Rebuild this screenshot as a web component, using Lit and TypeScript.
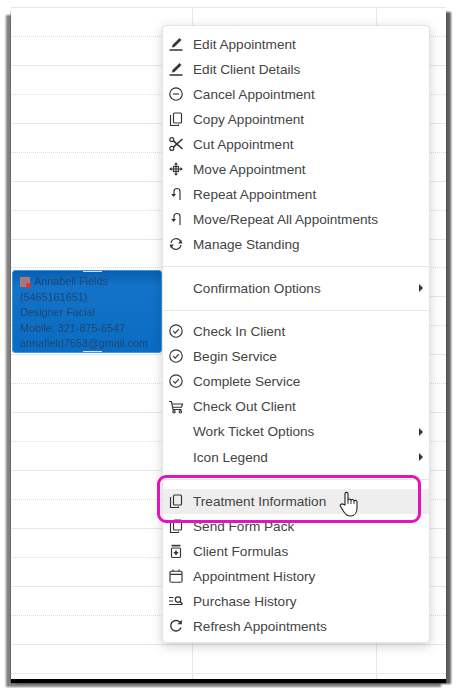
import { LitElement, html, css, svg } from "lit";
import { customElement } from "lit/decorators.js";

const pencil = svg`<path d="M4.2 11.2 L4.7 8.9 L11.5 2.3 L13.3 4.1 L6.5 10.7 Z" fill="#333" stroke="#333" stroke-width=".4"/><path d="M1.5 14 H14.5" stroke="#222" stroke-width="1.4"/>`;
const copy = svg`<rect x="5.5" y="2" width="8" height="10" rx="1"/><path d="M3.2 4.5 H2.5 V14.5 H10.5 V13.5" />`;
const check = svg`<circle cx="8" cy="8" r="6.2"/><path d="M5.2 8.2 L7.2 10.2 L10.8 6.2"/>`;
const repeat = svg`<path d="M6 8 V5.5 A3 3 0 0 1 12 5.5 V14"/><path d="M3.2 8 H8 L5.6 11 Z" fill="#333" stroke="none"/>`;

const ICONS: Record<string, unknown> = {
  pencil,
  cancel: svg`<circle cx="8" cy="8" r="6.2"/><path d="M5 8 H11"/>`,
  copy,
  cut: svg`<circle cx="3.8" cy="3.6" r="2"/><circle cx="3.8" cy="12.4" r="2"/><path d="M5.4 4.8 L14.5 13 M5.4 11.2 L14.5 3" stroke-width="1.6"/>`,
  move: svg`<path d="M8 2 V14 M2 8 H14"/><path d="M8 1.2 L10 3.6 H6 Z M8 14.8 L10 12.4 H6 Z M1.2 8 L3.6 6 V10 Z M14.8 8 L12.4 6 V10 Z" fill="#333" stroke="none"/><rect x="5.5" y="5.5" width="5" height="5" fill="none"/>`,
  repeat,
  sync: svg`<path d="M3 7 A5.2 5.2 0 0 1 12.2 4.6"/><path d="M13 9 A5.2 5.2 0 0 1 3.8 11.4"/><path d="M14.4 7.4 H10.2 L13 3.6 Z M1.6 8.6 H5.8 L3 12.4 Z" fill="#333" stroke="none"/>`,
  check,
  cart: svg`<path d="M1 2.5 H3.4 L5 10.5 H13.5 M4 5 H14.5 L13.5 8.2 H4.6"/><circle cx="6" cy="12.8" r="1.2"/><circle cx="12.4" cy="12.8" r="1.2"/>`,
  jar: svg`<rect x="3.5" y="1.8" width="9" height="1.6" fill="#333" stroke="none"/><rect x="3.5" y="5" width="9" height="9.5" rx="1"/><path d="M8 7.5 V12 M5.8 9.8 H10.2" stroke-width="1.6"/>`,
  calendar: svg`<rect x="2" y="3.2" width="12" height="11" rx="1.2"/><path d="M2 6.4 H14 M5 1.4 V3.5 M11 1.4 V3.5"/>`,
  search: svg`<path d="M1 4.5 H5.5 M1 8 H5 M1 11.5 H14.5"/><circle cx="10" cy="6.6" r="2.7"/><path d="M12 8.6 L14.5 10.8" stroke-width="1.5"/>`,
  refresh: svg`<path d="M13 9.6 A5.3 5.3 0 1 1 11.8 4" stroke-width="1.4"/><path d="M13.8 1.8 V6.2 H9.4 Z" fill="#333" stroke="none"/>`,
};

type Item = { label: string; icon?: string; arrow?: boolean; active?: boolean };
const GROUPS: Item[][] = [
  [
    { label: "Edit Appointment", icon: "pencil" },
    { label: "Edit Client Details", icon: "pencil" },
    { label: "Cancel Appointment", icon: "cancel" },
    { label: "Copy Appointment", icon: "copy" },
    { label: "Cut Appointment", icon: "cut" },
    { label: "Move Appointment", icon: "move" },
    { label: "Repeat Appointment", icon: "repeat" },
    { label: "Move/Repeat All Appointments", icon: "repeat" },
    { label: "Manage Standing", icon: "sync" },
  ],
  [{ label: "Confirmation Options", arrow: true }],
  [
    { label: "Check In Client", icon: "check" },
    { label: "Begin Service", icon: "check" },
    { label: "Complete Service", icon: "check" },
    { label: "Check Out Client", icon: "cart" },
    { label: "Work Ticket Options", arrow: true },
    { label: "Icon Legend", arrow: true },
  ],
  [
    { label: "Treatment Information", icon: "copy", active: true },
    { label: "Send Form Pack", icon: "copy" },
    { label: "Client Formulas", icon: "jar" },
    { label: "Appointment History", icon: "calendar" },
    { label: "Purchase History", icon: "search" },
    { label: "Refresh Appointments", icon: "refresh" },
  ],
];

@customElement("app-root")
export class AppRoot extends LitElement {
  static styles = css`
    :host { display: block; width: 460px; height: 688px; background: #fff; overflow: hidden; font-family: "Liberation Sans", Arial, sans-serif; }
    .stage { padding: 7px 14px 0 11px; }
    .panel {
      position: relative; height: 672px; background: #fff; border-top: 1px solid #e6e6e6; box-sizing: border-box;
      box-shadow: 0 4px 1px #000, 5px 5px 2px #5f5f5f, -5px 8px 2px #808080;
    }
    .grid { height: 100%; overflow: hidden; }
    .row { display: grid; grid-template-columns: 182px 184px 1fr; height: 28.95px; box-sizing: border-box; }
    .row.dot { border-bottom: 1px dotted #dcdcdc; }
    .row.solid { border-bottom: 1px solid #e6e6e6; }
    .cell { border-right: 1px solid #e6e6e6; }
    .cell:last-child { border-right: 0; }

    .appt {
      position: absolute; left: 1px; top: 262px; width: 150px; height: 83px; box-sizing: border-box;
      padding: 3px 0 0 7px; border-radius: 3px; font-size: 10.8px; line-height: 15.5px; color: #1f4672;
      background: linear-gradient(#0a5fae 0, #1273c8 18%, #0a6cc2 100%);
      border: 1px solid #3f94dc; filter: blur(.35px); white-space: nowrap;
    }
    .appt-first { display: flex; align-items: center; gap: 4px; }
    .tag { width: 10px; height: 10px; background: #a8757f; border: 1px solid #c07a75; box-sizing: border-box; border-radius: 1px; position: relative; flex: none; }
    .tag::after { content: ""; position: absolute; right: -2px; bottom: -2px; width: 5px; height: 5px; border-radius: 50%; background: #e0352b; }
    .grip { position: absolute; left: 70px; width: 19px; height: 1px; background: #cfe6fa; }
    .grip.t { top: 0; }
    .grip.b { bottom: 0; }

    .menu {
      position: absolute; left: 151px; top: 17px; width: 268px; height: 618px; box-sizing: border-box;
      padding: 5.5px 0 0; background: #fff; border: 1px solid #e4e4e4; border-radius: 4px;
      box-shadow: 0 3px 12px rgba(0, 0, 0, .18); font-size: 13.6px; color: #444;
    }
    .sep { height: 1px; background: #e6e6e6; margin: 9px 0; }
    .sep.tight { margin: 9px 0 8px; }
    .item { display: flex; align-items: center; height: 25px; padding: 0 6px 0 5px; position: relative; white-space: nowrap; }
    .group.g2 .item { height: 25.2px; }
    .item.active { background: #eeeeee; }
    .ico { width: 16px; height: 16px; margin-right: 9px; flex: none; fill: none; stroke: #333; stroke-width: 1.15; }
    .noicon { width: 16px; margin-right: 9px; flex: none; }
    .label { flex: 1; }
    .arrow { width: 0; height: 0; border-left: 4px solid #333; border-top: 4px solid transparent; border-bottom: 4px solid transparent; }

    .ring { position: absolute; left: 146px; top: 467px; width: 264px; height: 48px; box-sizing: border-box; border: 3px solid #e313bd; border-radius: 9px; }
    .hand { position: absolute; left: 328px; top: 483px; width: 20px; height: 26px; }
  `;

  render() {
    const rows = Array.from({ length: 24 }, (_, i) => i);
    return html`<div class="stage"><div class="panel">
      <div class="grid">
        ${rows.map((i) => html`<div class="row ${i % 2 ? "solid" : "dot"}"><div class="cell"></div><div class="cell"></div><div class="cell"></div></div>`)}
      </div>
      <div class="appt">
        <span class="grip t"></span><span class="grip b"></span>
        <div class="appt-first"><span class="tag"></span>Annabell Fields</div>
        <div>(5465161651)</div>
        <div>Designer Facial</div>
        <div>Mobile: 321-875-6547</div>
        <div>annafield7653@gmail.com</div>
      </div>
      <div class="menu">
        ${GROUPS.map((g, gi) => html`${gi ? html`<div class="sep ${gi === 2 ? "tight" : ""}"></div>` : ""}
          <div class="group g${gi}">${g.map((it) => html`<div class="item ${it.active ? "active" : ""}">
            ${it.icon ? html`<svg class="ico" viewBox="0 0 16 16">${ICONS[it.icon]}</svg>` : html`<span class="noicon"></span>`}
            <span class="label">${it.label}</span>
            ${it.arrow ? html`<span class="arrow"></span>` : ""}
          </div>`)}</div>`)}
      </div>
      <div class="ring"></div>
      <svg class="hand" viewBox="0 0 20 26"><path d="M6 14 V3 C6 .8 9 .8 9 3 V9 C9 7.6 12 7.6 12 9.4 C12 8 15 8 15 10 C15 9 18 9 18 11 V17 C18 21 16 25 11.5 25 C8 25 6.5 23.5 5 21 L1.5 15.5 C.5 13.5 3 12 4.5 13.5 Z" fill="#fff" stroke="#222" stroke-width="1.1" stroke-linejoin="round"/><path d="M9 9 V13 M12 9.4 V13 M15 10 V13" stroke="#222" stroke-width=".9" fill="none"/></svg>
    </div></div>`;
  }
}
